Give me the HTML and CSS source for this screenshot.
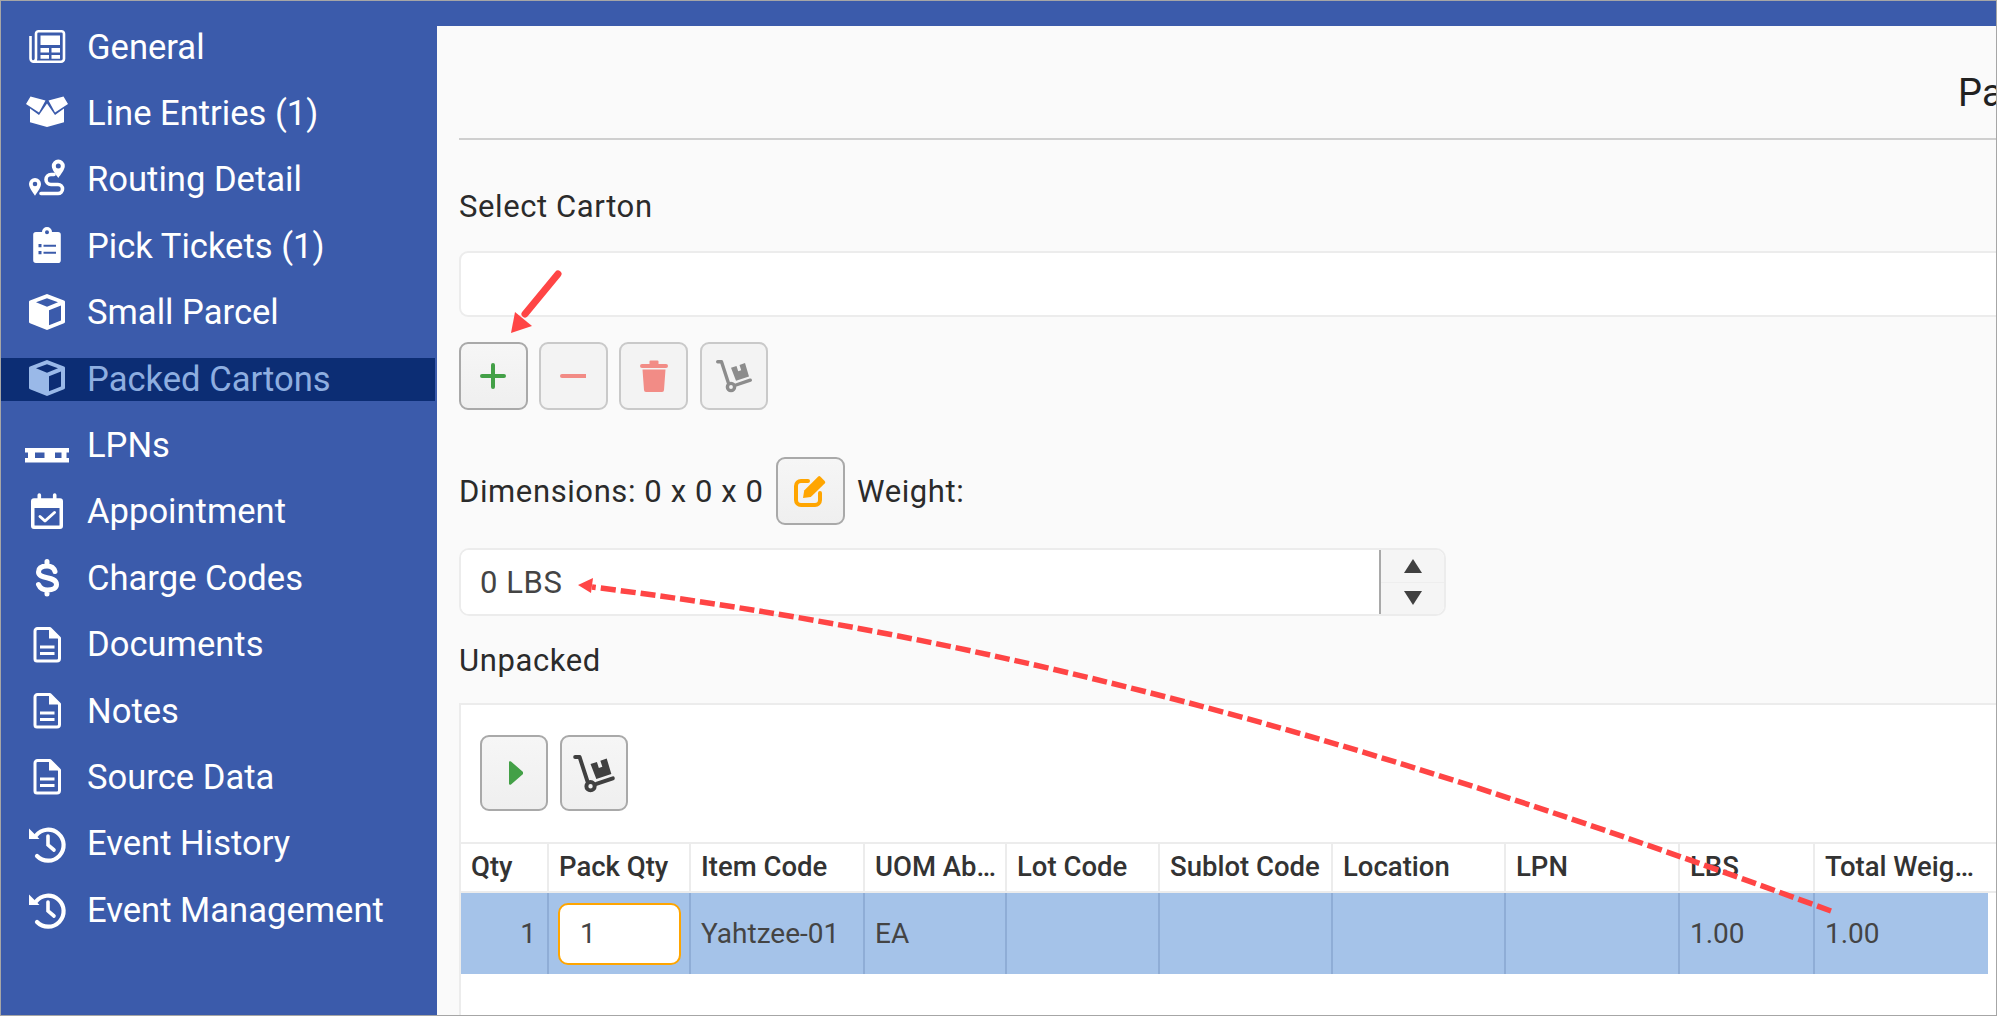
FILE: index.html
```html
<!DOCTYPE html>
<html lang="en">
<head>
<meta charset="utf-8">
<title>Packed Cartons</title>
<link rel="stylesheet" href="styles.css">
</head>
<body>
<svg class="defs" width="0" height="0" aria-hidden="true">
  <defs>
    <symbol id="i-news" viewBox="0 0 36 36" overflow="visible">
      <path class="ln" stroke-width="2.6" d="M1.5 7v22.500a3.200 3.200 0 0 0 3.200 3.200H32a3 3 0 0 0 3-3V4.800a2.500 2.500 0 0 0-2.500-2.500H9.500A2.500 2.500 0 0 0 7 4.800V29.500a3.200 3.200 0 0 1-3 3.200"/>
      <path d="M11.500 6.500h19.500v9.500H11.500zM11.500 19h8.500v4.500h-8.500zM22.500 19h8.500v4.500h-8.500zM11.500 26h8.500v3.800h-8.500zM22.500 26h8.500v3.800h-8.500z"/>
    </symbol>
    <symbol id="i-box" viewBox="0 0 36 36" overflow="visible">
      <path d="M-3 9 1.500 1.500 16.500 5.500 10 17.500zM39 9 34.500 1.500 19.500 5.500 26 17.500zM1 13.500l9 6.500L18 8.500 26 20l9-6.500v13.800L18 32 1 27.300z"/>
    </symbol>
    <symbol id="i-route" viewBox="0 0 36 36" overflow="visible">
      <path fill-rule="evenodd" d="M29.300-2.500a6.500 6.500 0 0 1 6.500 6.500c0 3.500-4 8.500-6.500 12-2.500-3.500-6.500-8.500-6.500-12a6.500 6.500 0 0 1 6.500-6.500zm0 4a2.500 2.500 0 1 0 0 5 2.500 2.500 0 0 0 0-5zM6 16a6 6 0 0 1 6 6c0 3.500-3.500 8-6 11.700C3.500 30 0 25.500 0 22a6 6 0 0 1 6-6zm0 3.700a2.300 2.300 0 1 0 0 4.600 2.300 2.300 0 0 0 0-4.600z"/>
      <path class="ln" stroke-width="3.600" stroke-linecap="round" d="M25 12.500h-3a5 5 0 0 0 0 10h7a4.500 4.500 0 0 1 0 9H12"/>
    </symbol>
    <symbol id="i-clip" viewBox="0 0 36 36" overflow="visible">
      <path fill-rule="evenodd" d="M13 4a5 5 0 0 1 10 0h6a2.800 2.800 0 0 1 2.800 2.800v25.400A2.800 2.800 0 0 1 29 35H7a2.800 2.800 0 0 1-2.800-2.800V6.800A2.800 2.800 0 0 1 7 4zm5-1.800a2 2 0 1 0 0 4 2 2 0 0 0 0-4zM9.500 16v3.200h3V16zm0 7v3.200h3V23zm5-6.300v2h12.500v-2zm0 7v2h12.500v-2z"/>
    </symbol>
    <symbol id="i-cube" viewBox="0 0 36 36" overflow="visible">
      <path fill-rule="evenodd" d="M18-1 35 5.500a1.500 1.500 0 0 1 1 1.500v20a1.500 1.500 0 0 1-1 1.300L18 35 1 28.300A1.500 1.500 0 0 1 0 27V7a1.500 1.500 0 0 1 1-1.500zm0 4.200L7 7.300l11 4.400 11-4.400zM20 15.200v15l12-4.800V10.500z"/>
    </symbol>
    <symbol id="i-pallet" viewBox="0 0 36 36" overflow="visible">
      <path d="M-4 21h44v4.500h-44zM-4 31h44v4.500h-44zM-1 25h7v6h-7zM15.500 25h10.500v6H15.500zM32.500 25h5v6h-5z"/>
    </symbol>
    <symbol id="i-cal" viewBox="0 0 36 36" overflow="visible">
      <path fill-rule="evenodd" d="M8.500 1a1.800 1.800 0 0 1 3.600 0v3.200h11.800V1a1.800 1.800 0 0 1 3.600 0v3.200H31a3 3 0 0 1 3 3V32a3 3 0 0 1-3 3H5a3 3 0 0 1-3-3V7.200a3 3 0 0 1 3-3h3.500zM5.500 14v17a.5.5 0 0 0 .5.500h24a.5.5 0 0 0 .5-.5V14z"/>
      <path class="ln" stroke-width="3" stroke-linecap="round" stroke-linejoin="round" d="M11 22.500l5 4.500 9.500-8.500"/>
    </symbol>
    <symbol id="i-dollar" viewBox="0 0 36 36" overflow="visible">
      <path class="ln" stroke-width="5" stroke-linecap="round" d="M18 1.500v4M18 31v3M26 11.500c-1-3.500-4-5.500-8-5.500-6 0-8.500 2.500-8.500 6 0 8 18 3.500 18 12.500 0 3.500-3.500 5.500-9 5.500-5 0-7.500-2-9-5.500"/>
    </symbol>
    <symbol id="i-doc" viewBox="0 0 36 36" overflow="visible">
      <path class="ln" stroke-width="3" stroke-linejoin="round" d="M21 1.500H8.500A2.500 2.500 0 0 0 6 4v28a2 2 0 0 0 2 2h20a2.500 2.500 0 0 0 2.500-2.500V11z"/>
      <path d="M20 1l11 10.500H20z"/>
      <path class="ln" stroke-width="3" d="M11 20h14.500M11 26.500h14.500"/>
    </symbol>
    <symbol id="i-hist" viewBox="0 0 36 36" overflow="visible">
      <path class="ln" stroke-width="4.200" stroke-linecap="round" d="M7 9.500A15.500 15.500 0 1 1 8 30"/>
      <path d="M0 2.500l10.500 10.500H0z"/>
      <path class="ln" stroke-width="3.600" stroke-linecap="round" d="M19 10v9l6 5"/>
    </symbol>
    <symbol id="i-dolly" viewBox="0 0 36 32" overflow="visible">
      <path class="ln" stroke-width="3.400" stroke-linecap="round" stroke-linejoin="round" d="M1.700 1.700H5.500l7 21.500"/>
      <circle class="ln" stroke-width="3.400" cx="15" cy="27" r="3.600"/>
      <path class="ln" stroke-width="3.400" stroke-linecap="round" d="M20 25l14.300-4.800"/>
      <path d="M15 7.800l5.500-1.800 1.700 5.200 3-1-1.700-5.200L29 3l4 13.500-13 4.300z"/>
    </symbol>
  </defs>
</svg>

<div class="window">
  <nav class="sidebar">
    <a class="nav-item"><svg class="nav-icon"><use href="#i-news"/></svg><span>General</span></a>
    <a class="nav-item"><svg class="nav-icon"><use href="#i-box"/></svg><span>Line Entries (1)</span></a>
    <a class="nav-item"><svg class="nav-icon"><use href="#i-route"/></svg><span>Routing Detail</span></a>
    <a class="nav-item"><svg class="nav-icon"><use href="#i-clip"/></svg><span>Pick Tickets (1)</span></a>
    <a class="nav-item"><svg class="nav-icon"><use href="#i-cube"/></svg><span>Small Parcel</span></a>
    <a class="nav-item active"><svg class="nav-icon"><use href="#i-cube"/></svg><span>Packed Cartons</span></a>
    <a class="nav-item"><svg class="nav-icon"><use href="#i-pallet"/></svg><span>LPNs</span></a>
    <a class="nav-item"><svg class="nav-icon"><use href="#i-cal"/></svg><span>Appointment</span></a>
    <a class="nav-item"><svg class="nav-icon"><use href="#i-dollar"/></svg><span>Charge Codes</span></a>
    <a class="nav-item"><svg class="nav-icon"><use href="#i-doc"/></svg><span>Documents</span></a>
    <a class="nav-item"><svg class="nav-icon"><use href="#i-doc"/></svg><span>Notes</span></a>
    <a class="nav-item"><svg class="nav-icon"><use href="#i-doc"/></svg><span>Source Data</span></a>
    <a class="nav-item"><svg class="nav-icon"><use href="#i-hist"/></svg><span>Event History</span></a>
    <a class="nav-item"><svg class="nav-icon"><use href="#i-hist"/></svg><span>Event Management</span></a>
  </nav>

  <main class="main">
    <div class="pane">
      <h1 class="title">Packed Cartons</h1>
      <hr class="rule">
      <div class="label label-select">Select Carton</div>
      <div class="select-box"></div>

      <div class="toolbar">
        <button class="btn btn-focus" type="button">
          <svg class="ic-plus" viewBox="0 0 26 26"><path d="M13 2v22M2 13h22"/></svg>
        </button>
        <button class="btn btn-off" type="button">
          <svg class="ic-minus" viewBox="0 0 26 26"><path d="M2 13h24"/></svg>
        </button>
        <button class="btn btn-off" type="button">
          <svg class="ic-trash" viewBox="0 0 28 32"><path d="M9.500 1.500a1 1 0 0 1 1-1h7a1 1 0 0 1 1 1V4H26a2 2 0 0 1 0 4H2a2 2 0 0 1 0-4h7.500zM2.500 9.500h23L24 30a2 2 0 0 1-2 2H6a2 2 0 0 1-2-2z"/></svg>
        </button>
        <button class="btn btn-off" type="button">
          <svg class="ic-dolly ic-dolly-off"><use href="#i-dolly"/></svg>
        </button>
      </div>

      <div class="dims">
        <span class="dims-text">Dimensions: 0 x 0 x 0</span>
        <button class="btn btn-focus" type="button">
          <svg class="ic-edit" viewBox="0 0 32 32">
            <path class="edit-box" d="M14 6H7a5 5 0 0 0-5 5v14a5 5 0 0 0 5 5h14a5 5 0 0 0 5-5v-7"/>
            <path class="edit-pen" d="M9 23l1.200-7.500L24 1.700a1.800 1.800 0 0 1 2.500 0l4.200 4.200a1.800 1.800 0 0 1 0 2.500L16.800 22z"/>
          </svg>
        </button>
        <span class="dims-text">Weight:</span>
      </div>

      <div class="spinner">
        <input class="spinner-input" type="text" value="0 LBS">
        <div class="spinner-btns">
          <span class="spin-cell"><i class="tri tri-up"></i></span>
          <span class="spin-cell"><i class="tri tri-down"></i></span>
        </div>
      </div>

      <div class="label label-unpacked">Unpacked</div>

      <section class="panel">
        <div class="panel-tools">
          <button class="btn btn-tall" type="button">
            <svg class="ic-play" viewBox="0 0 14 24"><path d="M2 0.500 13.500 10.500a2 2 0 0 1 0 3L2 23.500a1.200 1.200 0 0 1-2-1V1.500a1.200 1.200 0 0 1 2-1z"/></svg>
          </button>
          <button class="btn btn-tall" type="button">
            <svg class="ic-dolly ic-dolly-big"><use href="#i-dolly"/></svg>
          </button>
        </div>
        <div class="table-head">
          <div class="grid">
            <div class="th">Qty</div>
            <div class="th">Pack Qty</div>
            <div class="th">Item Code</div>
            <div class="th">UOM Abbreviation</div>
            <div class="th">Lot Code</div>
            <div class="th">Sublot Code</div>
            <div class="th">Location</div>
            <div class="th">LPN</div>
            <div class="th">LBS</div>
            <div class="th">Total Weight (LBS)</div>
          </div>
        </div>
        <div class="grid row">
          <div class="td td-num">1</div>
          <div class="td td-input"><input class="qty-input" type="text" value="1"></div>
          <div class="td">Yahtzee-01</div>
          <div class="td">EA</div>
          <div class="td"></div>
          <div class="td"></div>
          <div class="td"></div>
          <div class="td"></div>
          <div class="td">1.00</div>
          <div class="td">1.00</div>
        </div>
      </section>
    </div>
  </main>

  <svg class="notes" width="1997" height="1016" viewBox="0 0 1997 1016" aria-hidden="true">
    <path class="note-line" d="M558 274 525 314"/>
    <path class="note-fill" d="M511 333 515 312 532 326z"/>
    <path class="note-dash" d="M1831 911C1500 790 1100 650 592 587"/>
    <path class="note-fill" d="M578 585 593 578 591 593z"/>
  </svg>
</div>
</body>
</html>
```
FILE: styles.css
```css
* { box-sizing: border-box; }

html, body {
  margin: 0;
  height: 100%;
  overflow: hidden;
}

body {
  font-family: Roboto, "Liberation Sans", sans-serif;
  color: #212121;
}

.defs { position: absolute; }

.window {
  position: relative;
  display: grid;
  grid-template-columns: 436px 1fr;
  width: 1997px;
  height: 1016px;
  border: 1px solid #a6a6a6;
  background: #3b5bab;
  overflow: hidden;
}

/* Sidebar */
.sidebar {
  display: flex;
  flex-direction: column;
  gap: 23.4px;
  padding-top: 24.6px;
}

.nav-item {
  display: flex;
  align-items: center;
  gap: 22px;
  height: 43px;
  margin-right: 2px;
  padding-left: 28px;
  color: #fff;
  fill: #fff;
  font-size: 34.6px;
  line-height: 43px;
  white-space: nowrap;
}

.nav-item.active {
  background: #0c2d74;
  color: #8eaee0;
  fill: #9ab9e8;
}

.nav-icon {
  flex: none;
  width: 36px;
  height: 36px;
  overflow: visible;
}

.ln { fill: none; stroke: currentColor; }

.nav-item .ln { stroke: #fff; }
.nav-item.active .ln { stroke: #9ab9e8; }

/* Main */
.main {
  margin-top: 25px;
  background: #fafafa;
  overflow: hidden;
  min-width: 0;
}

.pane {
  width: 3288px;
  padding-left: 22px;
}

.title {
  margin: 0;
  height: 112px;
  padding-top: 44px;
  font-size: 38px;
  font-weight: 400;
  line-height: 46px;
  text-align: center;
  color: #212121;
}

.rule {
  margin: 0;
  height: 2px;
  border: 0;
  background: #cfcfcf;
}

.label {
  height: 40px;
  font-size: 31px;
  letter-spacing: 0.6px;
  line-height: 42px;
  color: #2b2b2b;
}

.label-select { margin-top: 46px; }
.label-unpacked { margin-top: 24px; }

.select-box {
  margin-top: 25px;
  height: 66px;
  border: 2px solid #ececec;
  border-radius: 9px;
  background: #fff;
}

.toolbar {
  display: flex;
  gap: 11.7px;
  margin-top: 25px;
}

.btn {
  display: flex;
  align-items: center;
  justify-content: center;
  flex: none;
  width: 68.5px;
  height: 68px;
  padding: 0;
  border: 2px solid #a9a9a9;
  border-radius: 9px;
  background: linear-gradient(#f6f6f6, #efefef);
}

.btn-off { border-color: #c9c9c9; background: #f3f3f3; }
.btn-tall { width: 68px; height: 76px; }

.ic-plus, .ic-minus { width: 26px; height: 26px; fill: none; stroke-width: 4; stroke-linecap: round; }
.ic-plus { stroke: #43a047; }
.ic-minus { stroke: #f28b85; }
.ic-trash { width: 28px; height: 32px; fill: #f28c86; }

.ic-dolly {
  width: 36px;
  height: 32px;
  overflow: visible;
  color: #404040;
  fill: #404040;
}
.ic-dolly-off { color: #8c8c8c; fill: #8c8c8c; }
.ic-dolly-big { width: 42px; height: 37px; }

.ic-edit { width: 32px; height: 32px; overflow: visible; }
.edit-box { fill: none; stroke: #ffa500; stroke-width: 4; stroke-linecap: round; }
.edit-pen { fill: #ffa500; }

.ic-play { width: 14px; height: 24px; margin-left: 4px; fill: #43a047; }

.dims {
  display: flex;
  align-items: center;
  gap: 12.5px;
  margin-top: 47px;
}

.dims-text {
  padding-top: 2px;
  font-size: 31px;
  letter-spacing: 0.6px;
  line-height: 40px;
  color: #2b2b2b;
}

.spinner {
  display: flex;
  width: 987px;
  height: 68px;
  margin-top: 23px;
  border: 2px solid #ececec;
  border-radius: 10px;
  background: #fff;
  overflow: hidden;
}

.spinner-input {
  flex: none;
  width: 920px;
  height: 100%;
  padding: 0 0 0 19px;
  border: 0;
  border-right: 2px solid #a9a9a9;
  background: #fff;
  font: 400 31px Roboto, sans-serif;
  letter-spacing: 0.6px;
  color: #444;
  outline: 0;
}

.spinner-btns {
  display: flex;
  flex-direction: column;
  flex: 1;
  background: #f5f5f5;
}

.spin-cell {
  display: flex;
  flex: 1;
  align-items: center;
  justify-content: center;
}

.spin-cell + .spin-cell { border-top: 1px solid #eee; }

.tri {
  width: 0;
  height: 0;
  border-left: 9.5px solid transparent;
  border-right: 9.5px solid transparent;
}
.tri-up { border-bottom: 14px solid #404040; }
.tri-down { border-top: 14px solid #404040; }

/* Panel and table */
.panel {
  height: 400px;
  margin-top: 23px;
  border: 2px solid #ececec;
  border-width: 2px 0 0 2px;
  background: #fff;
}

.panel-tools {
  display: flex;
  gap: 12px;
  padding: 30px 0 0 19px;
}

.table-head {
  margin-top: 31px;
  border-top: 2px solid #ececec;
  border-bottom: 2px solid #ececec;
}

.grid {
  display: grid;
  grid-template-columns: 88px 142px 174px 142px 153px 173px 173px 174px 135px 173px;
  width: 1527px;
}

.th {
  height: 47px;
  padding: 0 8px 0 10px;
  border-right: 2px solid #ececec;
  font-size: 27.5px;
  font-weight: 500;
  line-height: 45px;
  color: #333;
  white-space: nowrap;
  overflow: hidden;
  text-overflow: ellipsis;
}
.th:last-child { border-right: 0; }

.row { background: #a5c3e9; }

.td {
  height: 81px;
  padding: 0 8px 0 10px;
  border-right: 2px solid #8fadd6;
  font-size: 28px;
  line-height: 81px;
  color: #444;
  white-space: nowrap;
}
.td:last-child { border-right: 0; }
.td-num { padding-right: 11px; text-align: right; }

.td-input { display: flex; align-items: center; padding: 0; padding-left: 9px; }

.qty-input {
  width: 123px;
  height: 62px;
  padding: 0 0 0 20px;
  border: 2px solid #ffa500;
  border-radius: 10px;
  background: #fff;
  font: 400 28px Roboto, sans-serif;
  color: #444;
  outline: 0;
}

/* Hand-drawn annotations over the screenshot */
.notes {
  position: absolute;
  left: -1px;
  top: -1px;
  pointer-events: none;
}

.note-line { fill: none; stroke: #ff4545; stroke-width: 7; stroke-linecap: round; }
.note-dash { fill: none; stroke: #ff4545; stroke-width: 5.500; stroke-dasharray: 15 5; }
.note-fill { fill: #ff4545; }
```
